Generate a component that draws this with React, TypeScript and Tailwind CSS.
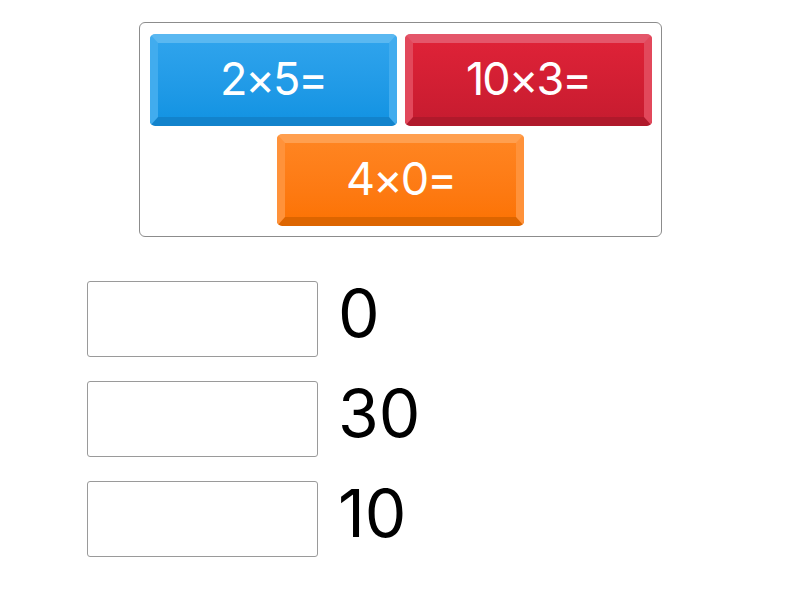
import React from "react";

const tiles = [
  { label: "2×5=", face: "bg-gradient-to-b from-[#2ea3ec] to-[#1494e3]", bevel: "border-t-[#5ab8f1] border-l-[#41acee] border-r-[#41acee] border-b-[#1283cc]" },
  { label: "10×3=", face: "bg-gradient-to-b from-[#de2237] to-[#c81c30]", bevel: "border-t-[#e4566a] border-l-[#e2485b] border-r-[#e2485b] border-b-[#b0192b]" },
  { label: "4×0=", face: "bg-gradient-to-b from-[#ff8420] to-[#fc7406]", bevel: "border-t-[#ff9f4f] border-l-[#ff923a] border-r-[#ff923a] border-b-[#dd6500]" },
];

function Tile({ t }: { t: (typeof tiles)[number] }) {
  return (
    <div
      className={`w-[247px] h-[92px] rounded-[5px] border-solid border-t-[9px] border-b-[9px] border-x-[8px] ${t.bevel} ${t.face} flex items-center justify-center text-white text-[45px] leading-none tracking-[-0.045em]`}
    >
      <span className="-mt-[4px]">{t.label}</span>
    </div>
  );
}

export default function App() {
  return (
    <div className="w-[800px] h-[600px] bg-white overflow-hidden font-['Inter','Liberation_Sans',sans-serif]">
      <div className="w-[523px] mx-auto mt-[22px] border border-[#8c8c8c] rounded-[6px] pt-[11px] pb-[10px] pl-[10px] pr-[9px] flex flex-wrap justify-center gap-[8px]">
        <Tile t={tiles[0]} />
        <Tile t={tiles[1]} />
        <Tile t={tiles[2]} />
      </div>
      <div className="mt-[44px] pl-[87px] flex flex-col gap-[24px]">
        {["0", "30", "10"].map((v) => (
          <div key={v} className="flex items-center gap-[20px]">
            <div className="w-[231px] h-[76px] border border-[#9a9a9a] rounded-[3px] bg-white" />
            <span className="text-[66px] leading-none text-black -mt-[12px]">{v}</span>
          </div>
        ))}
      </div>
    </div>
  );
}
